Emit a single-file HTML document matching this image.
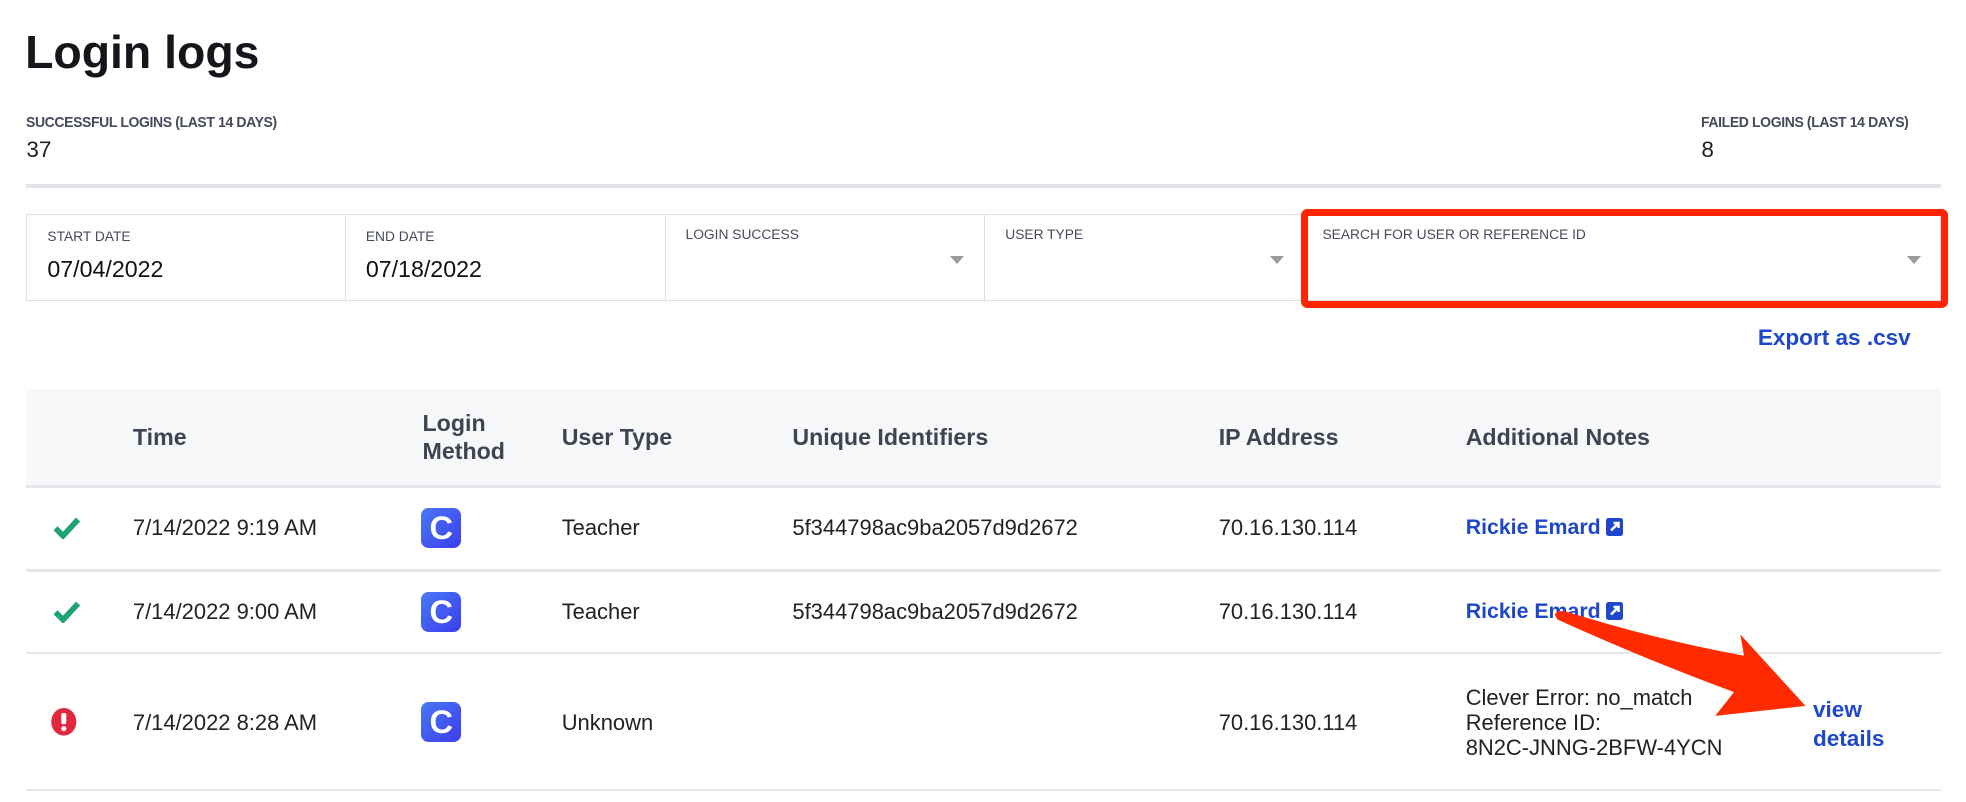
<!DOCTYPE html>
<html><head><meta charset="utf-8"><style>
html,body{margin:0;padding:0;background:#fff;overflow:hidden;width:1966px;height:802px}
#w{position:relative;width:1568px;height:640px;zoom:1.2538;font-family:"Liberation Sans",sans-serif;color:#1e1f24}
.a{position:absolute;white-space:nowrap}
.lab{font-size:11.5px;color:#454a5a;letter-spacing:-0.3px;font-weight:bold;transform:scaleX(0.97);transform-origin:left}
.box{position:absolute;top:171px;height:69px;border:1px solid #dcdfe3;box-sizing:border-box;background:#fff}
.box .l{position:absolute;left:16px;top:11px;font-size:11px;color:#454a5a}
.box .v{position:absolute;left:16px;top:32px;font-size:18.5px;color:#111}
.tri{position:absolute;width:0;height:0;border-left:6px solid transparent;border-right:6px solid transparent;border-top:7px solid #9a9a9a;top:32px}
.th{position:absolute;font-size:18.5px;font-weight:bold;color:#3f4352;line-height:22px}
.td{position:absolute;font-size:17.5px;color:#222}
.hr{position:absolute;left:21px;width:1527px;height:2px;background:#e5e7ea}
.c{position:absolute;left:336px;width:32px;height:32px;border-radius:6px;background:linear-gradient(135deg,#4a78f5,#3b3ded);color:#fff;font-weight:bold;font-size:26px;line-height:32px;text-align:center}
.blue{color:#1e48c9;font-weight:bold}
.ext{display:inline-block;width:14px;height:14px;background:#1e48c9;border-radius:2px;vertical-align:-1px;margin-left:4px;position:relative}
</style></head><body><div id="w">
<div class="a" style="left:20px;top:20px;font-size:37px;font-weight:bold;color:#15161b">Login logs</div>
<div class="a lab" style="left:21px;top:92px">SUCCESSFUL LOGINS (LAST 14 DAYS)</div>
<div class="a" style="left:21px;top:109px;font-size:18px">37</div>
<div class="a lab" style="left:1357px;top:92px">FAILED LOGINS (LAST 14 DAYS)</div>
<div class="a" style="left:1357px;top:109px;font-size:18px">8</div>
<div class="a" style="left:21px;top:147px;width:1527px;height:3px;background:#e1e4e8"></div>

<div class="box" style="left:21px;width:255px"><div class="l">START DATE</div><div class="v">07/04/2022</div></div>
<div class="box" style="left:275px;width:256px"><div class="l">END DATE</div><div class="v">07/18/2022</div></div>
<div class="box" style="left:530px;width:256px"><div class="l" style="top:9px">LOGIN SUCCESS</div><div class="tri" style="left:227px"></div></div>
<div class="box" style="left:785px;width:256px"><div class="l" style="top:9px">USER TYPE</div><div class="tri" style="left:227px"></div></div>
<div class="box" style="left:1040px;width:508px"><div class="l" style="top:9px;left:14px">SEARCH FOR USER OR REFERENCE ID</div><div class="tri" style="left:480px"></div></div>
<div class="a" style="left:1038px;top:167px;width:516px;height:79px;box-sizing:border-box;border:6px solid #ff2500;border-radius:5px"></div>

<div class="a blue" style="left:1402px;top:259px;font-size:18px">Export as .csv</div>

<div class="a" style="left:21px;top:310px;width:1527px;height:78px;background:#f7f8fa"></div>
<div class="th" style="left:106px;top:338px">Time</div>
<div class="th" style="left:337px;top:327px">Login<br>Method</div>
<div class="th" style="left:448px;top:338px">User Type</div>
<div class="th" style="left:632px;top:338px">Unique Identifiers</div>
<div class="th" style="left:972px;top:338px">IP Address</div>
<div class="th" style="left:1169px;top:338px">Additional Notes</div>
<div class="hr" style="top:387px"></div>
<div class="hr" style="top:454px"></div>
<div class="hr" style="top:520px"></div>
<div class="hr" style="top:629px"></div>

<svg class="a" style="left:42px;top:412px" width="22" height="18" viewBox="0 0 22 18"><path d="M2 9 L8 15 L20 2" stroke="#1fa27a" stroke-width="4.5" fill="none"/></svg>
<svg class="a" style="left:42px;top:479px" width="22" height="18" viewBox="0 0 22 18"><path d="M2 9 L8 15 L20 2" stroke="#1fa27a" stroke-width="4.5" fill="none"/></svg>
<svg class="a" style="left:40px;top:565px" width="22" height="22" viewBox="0 0 22 22"><ellipse cx="11" cy="11" rx="10" ry="11" fill="#e2283d"/><rect x="9" y="4" width="4" height="9" rx="1.5" fill="#fff"/><circle cx="11" cy="16.5" r="2" fill="#fff"/></svg>

<div class="td" style="left:106px;top:411px">7/14/2022 9:19 AM</div>
<div class="td" style="left:106px;top:478px">7/14/2022 9:00 AM</div>
<div class="td" style="left:106px;top:566px">7/14/2022 8:28 AM</div>
<div class="c" style="top:405px">C</div>
<div class="c" style="top:472px">C</div>
<div class="c" style="top:560px">C</div>
<div class="td" style="left:448px;top:411px">Teacher</div>
<div class="td" style="left:448px;top:478px">Teacher</div>
<div class="td" style="left:448px;top:566px">Unknown</div>
<div class="td" style="left:632px;top:411px">5f344798ac9ba2057d9d2672</div>
<div class="td" style="left:632px;top:478px">5f344798ac9ba2057d9d2672</div>
<div class="td" style="left:972px;top:411px">70.16.130.114</div>
<div class="td" style="left:972px;top:478px">70.16.130.114</div>
<div class="td" style="left:972px;top:566px">70.16.130.114</div>
<div class="td blue" style="left:1169px;top:411px;font-size:17px">Rickie Emard<span class="ext"><svg width="14" height="14" viewBox="0 0 14 14" style="position:absolute;left:0;top:0"><path d="M4 10 L10 4 M6 4 H10 V8" stroke="#fff" stroke-width="2" fill="none"/></svg></span></div>
<div class="td blue" style="left:1169px;top:478px;font-size:17px">Rickie Emard<span class="ext"><svg width="14" height="14" viewBox="0 0 14 14" style="position:absolute;left:0;top:0"><path d="M4 10 L10 4 M6 4 H10 V8" stroke="#fff" stroke-width="2" fill="none"/></svg></span></div>
<div class="td" style="left:1169px;top:546px;line-height:20px">Clever Error: no_match<br>Reference ID:<br>8N2C-JNNG-2BFW-4YCN</div>
<div class="td" style="left:1446px;top:555px;line-height:23px;color:#1e48c9;font-size:18px;font-weight:bold">view<br>details</div>

<svg class="a" style="left:0;top:0" width="1568" height="640"><path d="M1240 490 Q1243 486 1250 488 Q1320 510 1391 523 L1388 506 L1440 563 L1368 571 L1383 552 Q1310 525 1242 494 Z" fill="#ff2a00"/></svg>
</div></body></html>
